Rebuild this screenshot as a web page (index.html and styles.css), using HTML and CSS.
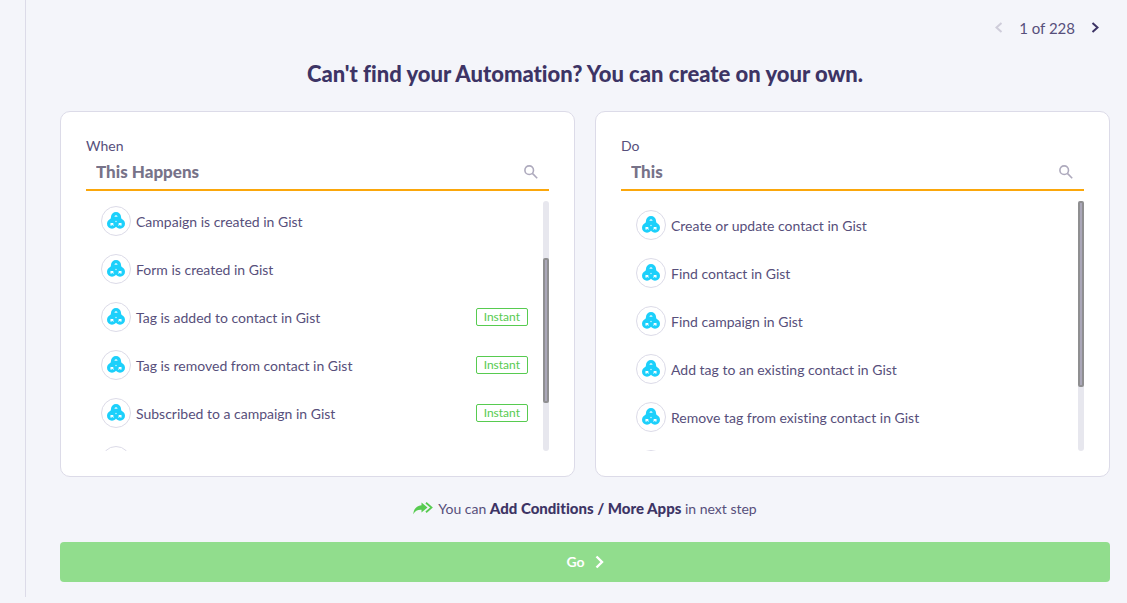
FILE: index.html
```
<!DOCTYPE html>
<html lang="en">
<head>
  <meta charset="UTF-8">
  <meta name="viewport" content="width=device-width, initial-scale=1.0">
  <title>Create your Automation</title>
  <link rel="stylesheet" href="styles.css">
</head>

<body>
  <!-- shared icons -->
  <svg class="sprite" aria-hidden="true">
    <symbol id="gist" viewBox="0 0 20 20">
      <g fill="none" stroke="#1cd0fb" stroke-width="3.600">
        <circle cx="10" cy="6" r="3.200"/>
        <circle cx="6" cy="12.800" r="3.200"/>
        <circle cx="14" cy="12.800" r="3.200"/>
      </g>
      <path d="M5.200 5.500h9.600l2 6.500H3.200z" fill="#1cd0fb"/>
      <g fill="#c5f2fd">
        <path d="M8.500 5.800a1.500 1.500 0 0 1 3 0z"/>
        <path d="M4 11.500l2 3.300H4.500z"/>
        <path d="M16 11.500l-2 3.300h1.500z"/>
        <circle cx="10" cy="10.500" r="0.800"/>
        <path d="M7 12.400l1 2.400H6.800zM13 12.400l-1 2.400h1.200z"/>
      </g>
    </symbol>
    <symbol id="search" viewBox="0 0 14 14">
      <g fill="none" stroke="#aeaabd" stroke-width="1.6">
        <circle cx="5.2" cy="5.2" r="4.3"/>
        <path d="M8.4 8.4L13.2 13.2"/>
      </g>
    </symbol>
  </svg>

  <main class="content">
    <nav class="pager" aria-label="Pages">
      <button class="pager-btn" aria-label="Previous" disabled>
        <svg width="8" height="12" viewBox="0 0 8 12"><path d="M6.500 1L1.500 5.500l5 4.500" fill="none" stroke="currentColor" stroke-width="2"/></svg>
      </button>
      <span class="pager-text">1 of 228</span>
      <button class="pager-btn" aria-label="Next">
        <svg width="8" height="12" viewBox="0 0 8 12"><path d="M1.500 1L6.500 5.500l-5 4.500" fill="none" stroke="currentColor" stroke-width="2"/></svg>
      </button>
    </nav>

    <h1 class="title">Can't find your Automation? You can create on your own.</h1>

    <div class="cards">
      <section class="card">
        <label class="label" for="trigger">When</label>
        <div class="search">
          <input class="search-input" id="trigger" type="text" placeholder="This Happens">
          <svg class="search-icon"><use href="#search"/></svg>
        </div>
        <div class="scroller">
          <ul class="list scrolled">
            <li class="item"><span class="app"><svg class="app-icon"><use href="#gist"/></svg></span><span class="name">Campaign is created in Gist</span></li>
            <li class="item"><span class="app"><svg class="app-icon"><use href="#gist"/></svg></span><span class="name">Form is created in Gist</span></li>
            <li class="item"><span class="app"><svg class="app-icon"><use href="#gist"/></svg></span><span class="name">Tag is added to contact in Gist</span><span class="tag">Instant</span></li>
            <li class="item"><span class="app"><svg class="app-icon"><use href="#gist"/></svg></span><span class="name">Tag is removed from contact in Gist</span><span class="tag">Instant</span></li>
            <li class="item"><span class="app"><svg class="app-icon"><use href="#gist"/></svg></span><span class="name">Subscribed to a campaign in Gist</span><span class="tag">Instant</span></li>
            <li class="item"><span class="app"></span></li>
          </ul>
          <div class="track track-middle"><div class="thumb"></div></div>
        </div>
      </section>

      <section class="card">
        <label class="label" for="action">Do</label>
        <div class="search">
          <input class="search-input" id="action" type="text" placeholder="This">
          <svg class="search-icon"><use href="#search"/></svg>
        </div>
        <div class="scroller">
          <ul class="list">
            <li class="item"><span class="app"><svg class="app-icon"><use href="#gist"/></svg></span><span class="name">Create or update contact in Gist</span></li>
            <li class="item"><span class="app"><svg class="app-icon"><use href="#gist"/></svg></span><span class="name">Find contact in Gist</span></li>
            <li class="item"><span class="app"><svg class="app-icon"><use href="#gist"/></svg></span><span class="name">Find campaign in Gist</span></li>
            <li class="item"><span class="app"><svg class="app-icon"><use href="#gist"/></svg></span><span class="name">Add tag to an existing contact in Gist</span></li>
            <li class="item"><span class="app"><svg class="app-icon"><use href="#gist"/></svg></span><span class="name">Remove tag from existing contact in Gist</span></li>
            <li class="item"><span class="app"></span></li>
          </ul>
          <div class="track track-top"><div class="thumb"></div></div>
        </div>
      </section>
    </div>

    <p class="hint">
      <svg width="20" height="13" viewBox="0 0 20 13">
        <path d="M8.500 0.500L14.500 5.500L8.500 10.500V7.800C4.500 7.600 2 9 0.300 12.300C0.600 7 3.500 3.600 8.500 3.200z" fill="#57cb50"/>
        <path d="M13 0.800L18.500 5.500L13 10.300" fill="none" stroke="#57cb50" stroke-width="1.800"/>
      </svg>
      <span>You can <b>Add Conditions / More Apps</b> in next step</span>
    </p>

    <button class="go">
      Go
      <svg width="9" height="14" viewBox="0 0 9 14"><path d="M1.500 1.500L7 7l-5.500 5.500" fill="none" stroke="currentColor" stroke-width="2.400"/></svg>
    </button>
  </main>
</body>
</html>
```
FILE: styles.css
```
*, *::before, *::after {
  box-sizing: border-box;
}

:root {
  --ink: #3d3465;
  --text: #574f7b;
  --line: #dcdbe8;
  --green: #57cb50;
}

body {
  margin: 0;
  padding: 0 0 6px 25px;
  background: #f4f5fa;
  color: var(--text);
  font-family: Lato, "Open Sans", sans-serif;
  font-size: 14px;
  font-variant-ligatures: none;
  line-height: 20px;
}

button, input {
  font: inherit;
}

.sprite {
  display: none;
}

.content {
  border-left: 1px solid var(--line);
  padding: 18px 17px 15px 34px;
}

/* pager */
.pager {
  display: flex;
  justify-content: flex-end;
  align-items: center;
  gap: 16px;
  padding-right: 11px;
  font-size: 15px;
}

.pager-btn {
  display: flex;
  padding: 0;
  border: 0;
  background: none;
  color: var(--ink);
}

.pager-btn:disabled {
  color: #cfcdda;
}

.title {
  margin: 21px 0 23px;
  color: var(--ink);
  font-size: 22px;
  line-height: 29px;
  font-weight: 900;
  text-align: center;
}

/* cards */
.cards {
  display: grid;
  grid-template-columns: 1fr 1fr;
  gap: 20px;
}

.card {
  padding: 24px 25px 25px;
  border: 1px solid var(--line);
  border-radius: 10px;
  background: #fff;
}

.label {
  display: block;
}

.search {
  display: flex;
  align-items: center;
  padding: 0 11px 2px 10px;
  border-bottom: 2px solid #fba70b;
}

.search-input {
  flex: 1;
  min-width: 0;
  height: 31px;
  padding: 0;
  border: 0;
  outline: none;
  background: none;
  color: var(--ink);
  font-size: 17px;
  font-weight: 900;
}

.search-input::placeholder {
  color: #777389;
}

.search-icon {
  width: 14px;
  height: 14px;
}

.scroller {
  display: flex;
  height: 250px;
  margin-top: 10px;
  overflow: hidden;
}

.list {
  flex: 1;
  margin: 0;
  padding: 0 15px;
  list-style: none;
}

.list.scrolled {
  margin-top: -4px;
}

.item {
  display: flex;
  align-items: center;
  gap: 5px;
  height: 48px;
}

.name {
  padding-top: 2px;
}

.app {
  display: flex;
  justify-content: center;
  align-items: center;
  width: 30px;
  height: 30px;
  border: 1px solid var(--line);
  border-radius: 50%;
}

.app-icon {
  width: 20px;
  height: 20px;
}

.tag {
  margin-left: auto;
  padding: 0 7px;
  border: 1px solid var(--green);
  border-radius: 2px;
  color: var(--green);
  font-size: 12px;
  line-height: 16px;
}

/* scrollbars */
.track {
  width: 6px;
  border-radius: 3px;
  background: #e7e7ee;
}

.thumb {
  border: 2px solid #8f8f91;
  border-radius: 2px;
  background: #aaa7b8;
}

.track-middle {
  padding-top: 57px;
}

.track-middle .thumb {
  height: 145px;
}

.track-top .thumb {
  height: 186px;
}

/* footer */
.hint {
  display: flex;
  justify-content: center;
  align-items: center;
  gap: 5px;
  height: 20px;
  margin: 21px 0 24px;
}

.hint b {
  color: var(--ink);
  font-size: 15px;
  font-weight: 900;
}

.go {
  display: flex;
  justify-content: center;
  align-items: center;
  gap: 10px;
  width: 100%;
  height: 40px;
  border: 0;
  border-radius: 4px;
  background: #91dd8d;
  color: #fff;
  font-weight: 700;
}
```
